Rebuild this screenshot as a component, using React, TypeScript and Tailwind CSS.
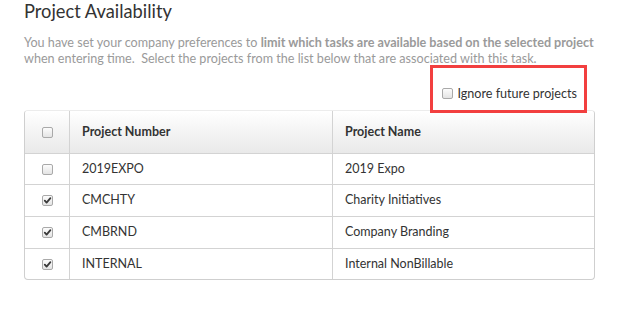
import React from "react";

function Box({ checked }: { checked?: boolean }) {
  return (
    <span className="inline-flex h-[11px] w-[11px] items-center justify-center rounded-[2px] border border-[#a9a9a9] bg-gradient-to-b from-[#fcfcfc] to-[#e4e4e4]">
      {checked && (
        <svg width="9" height="9" viewBox="0 0 9 9">
          <path d="M1.8 4.6 L3.6 6.6 L7.4 2.2" fill="none" stroke="#3a3a3a" strokeWidth="1.8" strokeLinecap="round" strokeLinejoin="round" />
        </svg>
      )}
    </span>
  );
}

const rows = [
  { num: "2019EXPO", name: "2019 Expo", checked: false, h: "h-[31px]" },
  { num: "CMCHTY", name: "Charity Initiatives", checked: true, h: "h-[32px]" },
  { num: "CMBRND", name: "Company Branding", checked: true, h: "h-[32px]" },
  { num: "INTERNAL", name: "Internal NonBillable", checked: true, h: "h-[31px]" },
];

export default function App() {
  return (
    <div className="relative h-[321px] w-[629px] bg-white text-[#333] [font-family:Lato,'Liberation_Sans',sans-serif]">
      <div className="ml-[24px] w-[571px]">
        <h1 className="text-[18.3px] leading-[22px] font-normal text-[#333]">Project Availability</h1>
        <p className="mt-[12.5px] w-[580px] text-[12.6px] leading-[16.5px] text-[#9a9a9a]">
          You have set your company preferences to <b className="font-bold">limit which tasks are available based on the selected project</b> when entering time.&nbsp; Select the projects from the list below that are associated with this task.
        </p>
        <div className="mt-[18px] flex justify-end pr-[18px]">
          <label className="flex items-center gap-[4px] text-[12.6px] leading-[16px] text-[#333]">
            <Box />
            <span>Ignore future projects</span>
          </label>
        </div>
        <div className="mt-[8.5px] overflow-hidden rounded-[4px] border border-[#cfcfcf] border-t-[#ececec] text-[12.5px]">
          <div className="flex h-[42px] items-center bg-gradient-to-b from-[#ffffff] to-[#e9e9e9] font-bold text-[#333]">
            <div className="flex h-full w-[45px] items-center justify-center border-r border-[#d3d3d3]">
              <Box />
            </div>
            <div className="flex h-full w-[263px] items-center border-r border-[#d3d3d3] pl-[12px]">Project Number</div>
            <div className="flex h-full flex-1 items-center pl-[12px]">Project Name</div>
          </div>
          {rows.map((r) => (
            <div key={r.num} className={`flex ${r.h} items-center border-t border-[#d3d3d3] text-[#333]`}>
              <div className="flex h-full w-[45px] items-center justify-center border-r border-[#d3d3d3]">
                <Box checked={r.checked} />
              </div>
              <div className="flex h-full w-[263px] items-center border-r border-[#d3d3d3] pl-[12px]">{r.num}</div>
              <div className="flex h-full flex-1 items-center pl-[12px]">{r.name}</div>
            </div>
          ))}
        </div>
      </div>
      <div className="pointer-events-none absolute left-[430px] top-[65px] h-[48px] w-[157px] border-[3px] border-[#f23f3f]" />
    </div>
  );
}
